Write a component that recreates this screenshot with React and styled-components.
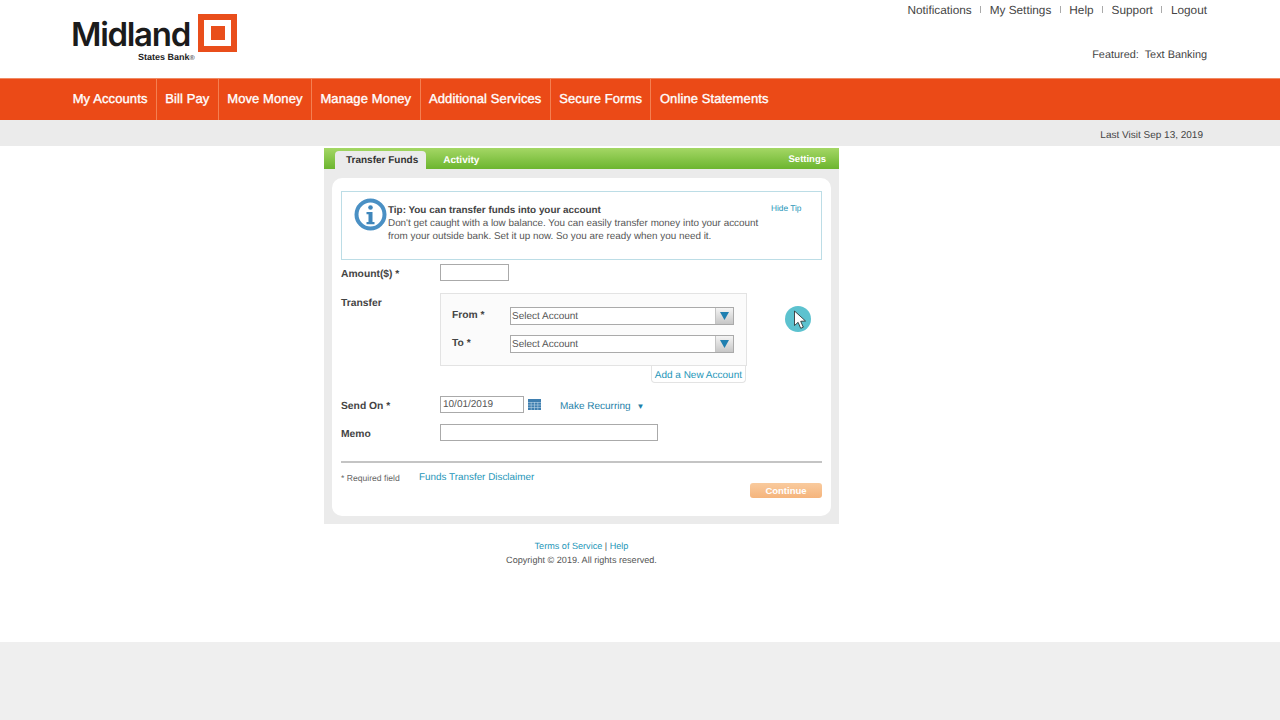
import React from 'react';
import styled, { createGlobalStyle } from 'styled-components';

const navItems = ['My Accounts', 'Bill Pay', 'Move Money', 'Manage Money', 'Additional Services', 'Secure Forms', 'Online Statements'];
const topLinks = ['Notifications', 'My Settings', 'Help', 'Support', 'Logout'];

const App = () => (
  <Page>
    <GlobalStyle />
    <Header>
      <Logo>
        <LogoText>
          <LogoName>Midland</LogoName>
          <LogoSub>States Bank<small>®</small></LogoSub>
        </LogoText>
        <svg width="39" height="38" viewBox="0 0 39 38">
          <rect width="39" height="38" fill="#e94e1b" />
          <rect x="6" y="6" width="27" height="26" fill="#fff" />
          <rect x="13" y="12" width="14" height="14" fill="#e94e1b" />
        </svg>
      </Logo>
      <HeaderRight>
        <TopLinks>
          {topLinks.map((link) => <TopLink key={link}>{link}</TopLink>)}
        </TopLinks>
        <Featured>Featured:&nbsp; Text Banking</Featured>
      </HeaderRight>
    </Header>
    <Nav>
      {navItems.map((item) => <NavItem key={item}>{item}</NavItem>)}
    </Nav>
    <VisitBar>Last Visit Sep 13, 2019</VisitBar>
    <Main>
      <Panel>
        <TabBar>
          <Tab $active>Transfer Funds</Tab>
          <Tab>Activity</Tab>
          <SettingsLink>Settings</SettingsLink>
        </TabBar>
        <Card>
          <TipBox>
            <svg width="33" height="33" viewBox="0 0 33 33">
              <circle cx="16.5" cy="16.5" r="14" fill="#fff" stroke="#4a90c4" strokeWidth="4" />
              <circle cx="16.5" cy="9.5" r="2.3" fill="#3f86bb" />
              <path d="M12.5 14h6v10h2v2.2h-8V24h2v-7.8h-2z" fill="#3f86bb" />
            </svg>
            <TipText>
              <TipTitle>Tip: You can transfer funds into your account</TipTitle>
              Don't get caught with a low balance. You can easily transfer money into your account from your outside bank. Set it up now. So you are ready when you need it.
            </TipText>
            <HideTip>Hide Tip</HideTip>
          </TipBox>
          <AmountRow>
            <Label>Amount($) *</Label>
            <TextInput $width={69} />
          </AmountRow>
          <TransferRow>
            <TransferLabel>Transfer</TransferLabel>
            <TransferColumn>
              <TransferBox>
                <AccountRow>
                  <AccountLabel>From *</AccountLabel>
                  <AccountSelect>
                    <SelectValue>Select Account</SelectValue>
                    <SelectArrow><ArrowGlyph /></SelectArrow>
                  </AccountSelect>
                </AccountRow>
                <AccountRow>
                  <AccountLabel>To *</AccountLabel>
                  <AccountSelect>
                    <SelectValue>Select Account</SelectValue>
                    <SelectArrow><ArrowGlyph /></SelectArrow>
                  </AccountSelect>
                </AccountRow>
              </TransferBox>
              <AddAccount>Add a New Account</AddAccount>
            </TransferColumn>
            <Pointer>
              <svg width="14" height="20" viewBox="0 0 14 20">
                <path d="M1.5 1v14.5l3.6-3.2 2.6 6 2.6-1.1-2.6-5.9 4.8-.3z" fill="#fff" stroke="#222" strokeWidth=".8" strokeLinejoin="round" />
              </svg>
            </Pointer>
          </TransferRow>
          <SendRow>
            <Label>Send On *</Label>
            <TextInput $width={84}>10/01/2019</TextInput>
            <CalendarIcon width="13" height="11" viewBox="0 0 13 11">
              <rect width="13" height="11" fill="#3f7fb0" />
              <path d="M0 3.5h13M0 6h13M0 8.500h13M3.200 3v8M6.500 3v8M9.800 3v8" stroke="#b9d3e6" strokeWidth=".6" />
            </CalendarIcon>
            <Recurring>Make Recurring<RecurringArrow>▼</RecurringArrow></Recurring>
          </SendRow>
          <MemoRow>
            <Label>Memo</Label>
            <TextInput $width={218} />
          </MemoRow>
          <Divider />
          <FormFooter>
            <Required>* Required field</Required>
            <Disclaimer>Funds Transfer Disclaimer</Disclaimer>
          </FormFooter>
          <Actions>
            <ContinueButton>Continue</ContinueButton>
          </Actions>
        </Card>
      </Panel>
      <Legal>
        <LegalLinks>Terms of Service <span>|</span> Help</LegalLinks>
        <Copyright>Copyright © 2019. All rights reserved.</Copyright>
      </Legal>
    </Main>
    <PageFooter />
  </Page>
);

const ArrowGlyph = () => (
  <svg width="9" height="8" viewBox="0 0 9 8">
    <path d="M0 0h9L4.500 8z" fill="#1f7fb0" />
  </svg>
);

export default App;

const GlobalStyle = createGlobalStyle`
  html, body {
    margin: 0;
    padding: 0;
    background: #fff;
  }
  body {
    font-family: 'Liberation Sans', Arial, sans-serif;
    color: #333;
    text-rendering: geometricPrecision;
  }
`;

const Page = styled.div`
  width: 1280px;
  height: 720px;
  display: flex;
  flex-direction: column;
  overflow: hidden;
`;

const Header = styled.header`
  height: 78px;
  display: flex;
  justify-content: space-between;
  padding: 0 73px;
  box-sizing: border-box;
`;

const Logo = styled.div`
  display: flex;
  align-items: flex-start;
  padding-top: 14px;
`;

const LogoText = styled.div`
  width: 125px;
  display: flex;
  flex-direction: column;
  align-items: flex-start;
  padding-top: 2px;
`;

const LogoName = styled.div`
  font-family: Inter, sans-serif;
  font-weight: 600;
  font-size: 33px;
  line-height: 36px;
  letter-spacing: -1.3px;
  margin-left: -2px;
  color: #1b1b1b;
`;

const LogoSub = styled.div`
  margin: 1px 0 0 65px;
  font-size: 9px;
  font-weight: 700;
  line-height: 9px;
  white-space: nowrap;
  color: #222;

  small {
    font-size: 7px;
    font-weight: 400;
  }
`;

const HeaderRight = styled.div`
  display: flex;
  flex-direction: column;
  align-items: flex-end;
`;

const TopLinks = styled.div`
  display: flex;
  padding-top: 3px;
`;

const TopLink = styled.a`
  font-size: 11.800px;
  line-height: 14px;
  color: #444;

  & + & {
    margin-left: 8.500px;
    padding-left: 9.500px;
    position: relative;
  }

  & + &::before {
    content: '';
    position: absolute;
    left: 0;
    top: 3px;
    height: 7px;
    width: 1px;
    background: #aaa;
  }
`;

const Featured = styled.div`
  font-size: 10.900px;
  line-height: 13px;
  margin-top: 32px;
  color: #444;
`;

const Nav = styled.nav`
  height: 42px;
  background: #eb4a17;
  border-top: 1px solid #f08a63;
  box-sizing: border-box;
  display: flex;
  padding-left: 64.300px;
`;

const NavItem = styled.a`
  display: flex;
  align-items: center;
  padding: 0 8.400px 2px;
  font-size: 13px;
  letter-spacing: 0.1px;
  color: #fff;
  -webkit-text-stroke: 0.35px #fff;
  border-right: 1px solid #f47f52;

  &:last-child {
    border-right: none;
  }
`;

const VisitBar = styled.div`
  height: 26px;
  background: #ebebeb;
  display: flex;
  align-items: center;
  justify-content: flex-end;
  padding: 4px 77px 0 0;
  box-sizing: border-box;
  font-size: 10px;
  color: #444;
`;

const Main = styled.main`
  flex: 1;
  padding: 2px 0 0 324px;
`;

const Panel = styled.section`
  width: 515px;
  background: #ebebeb;
  padding-bottom: 8px;
`;

const TabBar = styled.div`
  height: 21px;
  background: linear-gradient(#a4d765, #6cb52f);
  display: flex;
  align-items: flex-end;
  padding: 0 13px 0 11px;
  font-size: 10px;
  font-weight: 700;
`;

const Tab = styled.a`
  height: 18px;
  padding: 0 8px 0 11px;
  box-sizing: border-box;
  display: flex;
  align-items: center;
  margin-right: 6px;
  border-radius: 4px 4px 0 0;
  color: ${(p) => (p.$active ? '#333' : '#fff')};
  background: ${(p) => (p.$active ? '#ebebeb' : 'transparent')};
`;

const SettingsLink = styled.a`
  margin-left: auto;
  align-self: center;
  padding-top: 2px;
  font-size: 9.500px;
  color: #fff;
`;

const Card = styled.div`
  margin: 9px 8px 0;
  height: 338px;
  background: #fff;
  border-radius: 10px;
  padding: 13px 9px 0;
  box-sizing: border-box;
`;

const TipBox = styled.div`
  height: 69px;
  box-sizing: border-box;
  border: 1px solid #bcdde6;
  display: flex;
  align-items: flex-start;
  padding: 6px 0 0 12px;
`;

const TipText = styled.div`
  width: 375px;
  margin: 6px 0 0 1px;
  font-size: 9.900px;
  line-height: 13px;
  color: #555;
`;

const TipTitle = styled.div`
  font-weight: 700;
  color: #444;
`;

const HideTip = styled.a`
  margin: 5px 0 0 8px;
  font-size: 8.300px;
  color: #1e96b8;
`;

const Row = styled.div`
  display: flex;
  align-items: center;
`;

const Label = styled.label`
  width: 99px;
  padding-top: 4px;
  font-size: 10.300px;
  font-weight: 700;
  color: #444;
`;

const AmountRow = styled(Row)`
  margin-top: 4px;
`;

const TextInput = styled.div`
  width: ${(p) => p.$width}px;
  height: 17px;
  box-sizing: border-box;
  border: 1px solid #aaa;
  padding-left: 2px;
  font-size: 10px;
  line-height: 16px;
  color: #555;
`;

const TransferRow = styled(Row)`
  position: relative;
  align-items: flex-start;
  margin-top: 12px;
`;

const TransferLabel = styled(Label)`
  margin-top: 1px;
`;

const TransferColumn = styled.div`
  width: 307px;
  display: flex;
  flex-direction: column;
  align-items: flex-end;
`;

const TransferBox = styled.div`
  width: 100%;
  height: 73px;
  box-sizing: border-box;
  border: 1px solid #e3e3e3;
  background: #fbfbfb;
  padding: 13px 12px 0 11px;
  display: flex;
  flex-direction: column;
  gap: 10px;
`;

const AccountRow = styled(Row)`
  height: 18px;
`;

const AccountLabel = styled(Label)`
  width: 58px;
  margin-top: -5px;
`;

const AccountSelect = styled.div`
  flex: 1;
  height: 18px;
  box-sizing: border-box;
  border: 1px solid #aaa;
  background: #fff;
  padding-left: 1px;
  display: flex;
  align-items: center;
  justify-content: space-between;
  font-size: 10px;
  color: #555;
`;

const SelectValue = styled.span`
  margin-top: 1px;
`;

const SelectArrow = styled.span`
  width: 17px;
  height: 16px;
  display: flex;
  align-items: center;
  justify-content: center;
  border-left: 1px solid #c4c4c4;
  background: linear-gradient(#f4f4f4, #c6c6c6);
`;

const AddAccount = styled.a`
  margin-right: 1px;
  height: 17px;
  box-sizing: border-box;
  padding: 2px 3px 0;
  display: flex;
  align-items: center;
  border: 1px solid #e3e3e3;
  border-top: none;
  border-radius: 0 0 4px 4px;
  font-size: 10px;
  color: #1e96b8;
`;

const Pointer = styled.div`
  position: absolute;
  left: 444px;
  top: 13px;
  width: 26px;
  height: 26px;
  border-radius: 50%;
  background: #5cc2cf;
  display: flex;
  align-items: center;
  justify-content: center;

  svg {
    margin: 2px 0 0 3px;
  }
`;

const SendRow = styled(Row)`
  margin-top: 13px;
`;

const CalendarIcon = styled.svg`
  margin-left: 4px;
`;

const Recurring = styled.a`
  margin: 3px 0 0 19px;
  font-size: 10px;
  color: #1e7fa8;
`;

const RecurringArrow = styled.span`
  margin-left: 6px;
  font-size: 8px;
  color: #1e7fa8;
`;

const MemoRow = styled(Row)`
  margin-top: 11px;
`;

const Divider = styled.div`
  height: 2px;
  margin-top: 20px;
  background: #c4c4c4;
`;

const FormFooter = styled(Row)`
  height: 14px;
  margin-top: 7px;
`;

const Required = styled.span`
  width: 78px;
  margin-top: 1px;
  font-size: 8.600px;
  color: #666;
`;

const Disclaimer = styled.a`
  margin-top: 1px;
  font-size: 9.900px;
  color: #1e96b8;
`;

const Actions = styled.div`
  display: flex;
  justify-content: flex-end;
  margin-top: -1px;
`;

const ContinueButton = styled.button`
  width: 72px;
  height: 15px;
  padding: 0;
  border: none;
  border-radius: 3px;
  background: linear-gradient(#f9cb9e, #f5b47c);
  color: #fff;
  font-family: inherit;
  font-size: 9.500px;
  font-weight: 700;
`;

const Legal = styled.div`
  width: 515px;
  margin-top: 15px;
  text-align: center;
  font-size: 9.100px;
  line-height: 14px;
`;

const LegalLinks = styled.div`
  color: #1e96b8;

  span {
    color: #555;
  }
`;

const Copyright = styled.div`
  color: #555;
`;

const PageFooter = styled.footer`
  height: 78px;
  background: #efefef;
`;
